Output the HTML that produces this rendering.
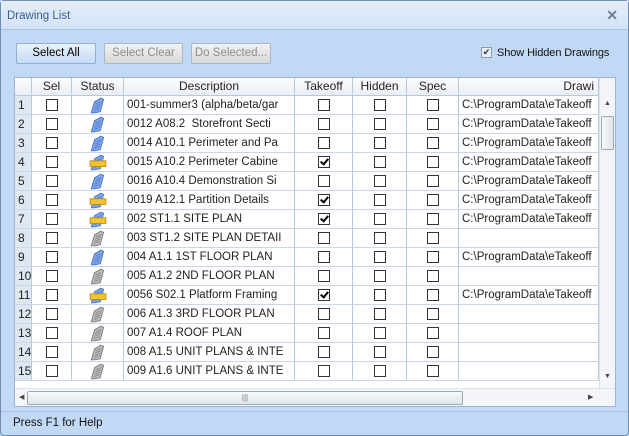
<!DOCTYPE html><html><head><style>
*{margin:0;padding:0;box-sizing:border-box}
body{width:629px;height:436px;overflow:hidden;font-family:"Liberation Sans",sans-serif;font-size:12px;background:#c2d9f5;position:relative}
.win{position:absolute;left:0;top:0;width:629px;height:436px;border:1px solid #6d8db5;border-radius:4px;background:#c2d9f5}
.title{position:absolute;left:0;top:0;width:627px;height:29px;background:linear-gradient(#e3edf9,#d3e3f7);border-bottom:1px solid #a9c3e2;color:#3a5f8f;font-size:11.5px;padding:9px 0 0 6px}
.x{position:absolute;right:10px;top:6px;color:#6b7f99;font-size:14px;font-weight:bold}
.btn{position:absolute;top:42px;height:21px;border:1px solid #a8b8cc;border-radius:2px;font-size:11.5px;text-align:center;line-height:19px}
.b1{left:15px;width:80px;background:linear-gradient(#e8f1fb,#c6dcf5);color:#000;border-color:#8fb0d8}
.b2{background:linear-gradient(#f2f2f2,#d8d8d8);color:#8d8d8d}
.grid{position:absolute;left:13px;top:76px;width:602px;height:330px;background:#fff;border:1px solid #a0b4cc;overflow:hidden}
.c{position:absolute;height:19px;border-right:1px solid #b9c9dc;border-bottom:1px solid #c8d6e6;line-height:18px;font-size:11.5px;white-space:nowrap;overflow:hidden;color:#222}
.h{background:linear-gradient(#fbfcfe,#e9eef5);text-align:center;height:18px;line-height:17px;border-bottom:1px solid #b9c9dc;font-size:12px}
.rh{background:#dfe7f1;padding-left:3px;font-size:12px}
.cb{display:block;width:12px;height:12px;border:1px solid #333;background:#fff;margin:3px auto 0;position:relative}
.ck::after{content:"";position:absolute;left:3px;top:0px;width:3px;height:6px;border:solid #000;border-width:0 2px 2px 0;transform:rotate(40deg)}
.ic{display:block;margin:1px auto 0;width:18px;height:17px}
</style></head><body><div class="win">
<div class="title">Drawing List<span class="x">✕</span></div>
<div class="btn b1">Select All</div>
<div class="btn b2" style="left:103px;width:79px">Select Clear</div>
<div class="btn b2" style="left:190px;width:80px">Do Selected...</div>
<div style="position:absolute;left:480px;top:46px;width:11px;height:11px;border:1px solid #8a9bb0;background:#e9eef4;font-size:9px;line-height:9px;text-align:center;color:#333">✔</div>
<div style="position:absolute;left:496px;top:46px;font-size:11px;color:#111;letter-spacing:-0.1px">Show Hidden Drawings</div>
<div class="grid" id="g"></div>
<div style="position:absolute;left:0;top:410px;width:627px;height:1px;background:#a9c3e2"></div>
<div style="position:absolute;left:12px;top:416px;font-size:11.5px;color:#111">Press F1 for Help</div>
</div>
<script>
var g=document.getElementById('g');
var cols=[[0,17],[17,40],[57,52],[109,171],[280,58],[338,54],[392,52],[444,140]];
var hd=['','Sel','Status','Description','Takeoff','Hidden','Spec','Drawi'];
var h='';
hd.forEach(function(t,i){h+='<div class="c h" style="left:'+cols[i][0]+'px;top:0;width:'+cols[i][1]+'px;'+(i==7?'text-align:right;padding-right:4px':'')+'">'+t+'</div>'});
var d=['001-summer3 (alpha/beta/gar','0012 A08.2&nbsp; Storefront Secti','0014 A10.1 Perimeter and Pa','0015 A10.2 Perimeter Cabine','0016 A10.4 Demonstration Si','0019 A12.1 Partition Details','002 ST1.1 SITE PLAN','003 ST1.2 SITE PLAN DETAII','004 A1.1 1ST FLOOR PLAN','005 A1.2 2ND FLOOR PLAN','0056 S02.1 Platform Framing','006 A1.3 3RD FLOOR PLAN','007 A1.4 ROOF PLAN','008 A1.5 UNIT PLANS &amp; INTE','009 A1.6 UNIT PLANS &amp; INTE'];
var st='bbbybyygbgyggggg',ck=[3,5,6,10],pth=[0,1,2,3,4,5,6,8,10];
var colr={b:['#7fa6e8','#4a74c9'],y:['#7fa6e8','#4a74c9'],g:['#b9b9b9','#7d7d7d']};
for(var r=0;r<15;r++){var y=18+r*19;
h+='<div class="c rh" style="left:0;top:'+y+'px;width:17px">'+(r+1)+'</div>';
h+='<div class="c" style="left:17px;top:'+y+'px;width:40px"><span class="cb"></span></div>';
var s=st[r],cc=colr[s];
var svg='<svg class="ic" viewBox="0 0 16 15"><path d="M2 14 L5 4 L9 2 L10 1 L13 2 L10 13 L5 14 Z" fill="'+cc[0]+'" stroke="'+cc[1]+'" stroke-width="0.8"/><path d="M6 6 L11 4 M5.5 8 L10.5 6 M5 10 L10 8 M4.5 12 L9.5 10" stroke="'+cc[1]+'" stroke-width="0.6"/>'+(s=='y'?'<rect x="1" y="6" width="14" height="5" fill="#f1c232" stroke="#c28e0e" stroke-width="0.8"/>':'')+'</svg>';
h+='<div class="c" style="left:57px;top:'+y+'px;width:52px">'+svg+'</div>';
h+='<div class="c" style="left:109px;top:'+y+'px;width:171px;padding-left:3px">'+d[r]+'</div>';
h+='<div class="c" style="left:280px;top:'+y+'px;width:58px"><span class="cb'+(ck.indexOf(r)>=0?' ck':'')+'"></span></div>';
h+='<div class="c" style="left:338px;top:'+y+'px;width:54px"><span class="cb"></span></div>';
h+='<div class="c" style="left:392px;top:'+y+'px;width:52px"><span class="cb"></span></div>';
h+='<div class="c" style="left:444px;top:'+y+'px;width:140px;padding-left:3px">'+(pth.indexOf(r)>=0?'C:\\ProgramData\\eTakeoff':'')+'</div>';
}
h+='<div style="position:absolute;left:584px;top:0;width:17px;height:310px;background:#f3f5f8;border-left:1px solid #dde3ea"></div>';
h+='<div style="position:absolute;left:589px;top:22px;font-size:7px;color:#444">▲</div>';
h+='<div style="position:absolute;left:586px;top:38px;width:13px;height:34px;border:1px solid #9aa8b8;border-radius:2px;background:linear-gradient(90deg,#f7f9fb,#dfe5ec)"></div>';
h+='<div style="position:absolute;left:589px;top:295px;font-size:7px;color:#444">▼</div>';
h+='<div style="position:absolute;left:0;top:310px;width:601px;height:19px;background:#f3f5f8;border-top:1px solid #dde3ea"></div>';
h+='<div style="position:absolute;left:4px;top:315px;font-size:7px;color:#444">◀</div>';
h+='<div style="position:absolute;left:12px;top:313px;width:436px;height:14px;border:1px solid #9aa8b8;border-radius:2px;background:linear-gradient(#f7f9fb,#dfe5ec);text-align:center;font-size:8px;line-height:12px;color:#777">|||</div>';
h+='<div style="position:absolute;left:573px;top:315px;font-size:7px;color:#444">▶</div>';
g.innerHTML=h;
</script></body></html>
